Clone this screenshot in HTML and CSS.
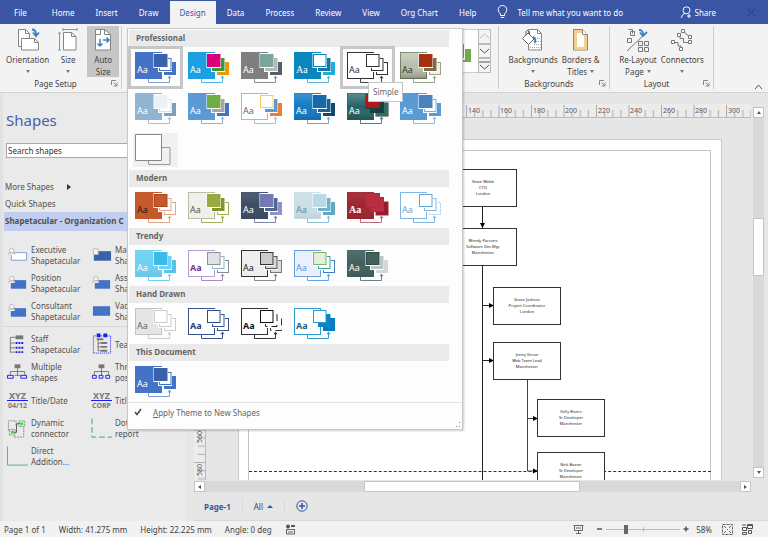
FILE: index.html
```html
<!DOCTYPE html>
<html lang="en">
<head>
<meta charset="utf-8">
<title>Organization chart</title>
<link rel="stylesheet" href="styles.css">
</head>
<body>
<svg class="defs" aria-hidden="true">
  <defs>
    <linearGradient id="shade" x1="0" y1="0" x2="0" y2="1"><stop offset="0" stop-color="#fff" stop-opacity=".5"/><stop offset=".5" stop-color="#fff" stop-opacity="0"/><stop offset="1" stop-color="#000" stop-opacity=".4"/></linearGradient>
    <symbol id="theme-art" viewBox="0 0 42 32">
      <path class="art-line" d="M13.500 27v3.500h21V25"/><path class="art-tip" d="M34.500 23.500l2 2.800h-4z"/>
      <rect class="art-main" x=".5" y=".5" width="26" height="26"/><rect class="art-shade" x=".5" y=".5" width="26" height="26" fill="url(#shade)"/>
      <rect class="art-gap" x="28.500" y="9.500" width="13" height="14"/><rect class="art-c" x="29.500" y="10.500" width="11" height="12"/>
      <rect class="art-gap" x="23" y="5" width="14" height="15"/><rect class="art-b" x="24.500" y="6.500" width="11.500" height="12"/>
      <rect class="art-gap" x="18.500" y="1" width="14.500" height="15"/><rect class="art-a" x="19.500" y="2.500" width="12.500" height="12"/>
    </symbol>
    <symbol id="launcher" viewBox="0 0 7 7"><path d="M.5 5V.5H5M2.500 2.500l3 3M6 2.500V6H2.500" fill="none" stroke="#888"/></symbol>
  </defs>
</svg>

<header class="tabs">
  <nav class="tab-list" aria-label="Ribbon tabs">
    <button class="tab file">File</button><button class="tab">Home</button><button class="tab">Insert</button><button class="tab">Draw</button><button class="tab active">Design</button><button class="tab">Data</button><button class="tab">Process</button><button class="tab">Review</button><button class="tab">View</button><button class="tab">Org Chart</button><button class="tab">Help</button>
  </nav>
  <button class="tell">
    <svg width="11" height="14" viewBox="0 0 11 14" fill="none" stroke="#fff"><path d="M3.500 10.500V9C2.500 7.800 1.200 6.800 1.200 4.800a4.300 4.300 0 0 1 8.600 0c0 2-1.300 3-2.300 4.200v1.500zM3.700 12.500h3.600"/></svg>
    Tell me what you want to do</button>
  <button class="share">
    <svg width="11" height="13" viewBox="0 0 11 13" fill="none" stroke="#fff"><circle cx="5.500" cy="4.300" r="3.500"/><path d="M.6 11.800C.6 9 2.500 7.800 4 7.600M8 8v4M6 10h4"/></svg>
    Share</button>
  <button class="close" aria-label="Close"><svg width="9" height="9" viewBox="0 0 9 9"><path d="M1 1l7 7M8 1L1 8" stroke="#2c3a63"/></svg></button>
</header>

<section class="ribbon" aria-label="Design">
  <div class="group setup">
    <div class="tools">
      <button class="tool"><svg width="24" height="24" viewBox="0 0 24 24" fill="#fff" stroke="#858585"><path d="M2.500 1.500h7l4 4v13h-11z"/><path d="M9.500 1.500v4h4" fill="none"/><path d="M5.500 10.500h13l4 4v7.500h-17z"/><path d="M18.500 10.500v4h4" fill="none"/><path d="M16 1.500c3 0 4 1.500 4 5M17 4.500l3 3.500 3-3.500" fill="none" stroke="#3f7fbf" stroke-width="1.800"/></svg><span>Orientation</span><i class="caret"></i></button>
      <button class="tool"><svg width="20" height="24" viewBox="0 0 20 24" fill="none" stroke="#858585"><path d="M5.500 4.500h8l4.500 4v13.500H5.500z" fill="#fff"/><path d="M13.500 4.500v4H18"/><path d="M5 1.500h14M5 0v3M19 0v3M1.500 5v17M0 5h3M0 22h3" stroke="#6a9ccb"/></svg><span>Size</span><i class="caret"></i></button>
      <button class="tool pressed"><svg width="18" height="24" viewBox="0 0 18 24" fill="#fff" stroke="#858585"><path d="M1.500 1.500h9l6 5V22h-15z"/><path d="M10.500 1.500v5h6M6.500 1.500v5h-5" fill="none"/><path d="M6 11v7M3.500 15.500L6 18l2.500-2.500M9 12h6M12.500 9.500L15 12l-2.500 2.500" fill="none" stroke="#3f7fbf" stroke-width="1.500"/></svg><span>Auto<br>Size</span></button>
    </div>
    <div class="group-name">Page Setup<svg class="launch"><use href="#launcher"/></svg></div>
  </div>
  <div class="group variants">
    <div class="preview"><svg width="10" height="24" viewBox="0 0 10 24"><path d="M0 6h9v13H0z" fill="#70ad47"/><path d="M0 0h3v17H0z" fill="#fff"/><path d="M0 1h2v14H0z" fill="#33b5a9"/></svg></div>
    <div class="spin">
      <button aria-label="Row up"><svg width="11" height="6" viewBox="0 0 11 6"><path d="M1 5l4.500-4L10 5" fill="none" stroke="#bbb"/></svg></button>
      <button aria-label="Row down"><svg width="11" height="6" viewBox="0 0 11 6"><path d="M1 1l4.500 4L10 1" fill="none" stroke="#555"/></svg></button>
      <button aria-label="More"><svg width="11" height="10" viewBox="0 0 11 10"><path d="M0 1h11M1 4l4.500 4L10 4" fill="none" stroke="#555"/></svg></button>
    </div>
  </div>
  <div class="group backgrounds">
    <div class="tools">
      <button class="tool"><svg width="24" height="24" viewBox="0 0 24 24" fill="none" stroke="#858585"><path d="M7.500 1.500h9l4 4V22h-13z" fill="#fff"/><path d="M16.500 1.500v4h4"/><path d="M9 19.500h11M13 16.500h7M15 13.500h5M16 10.500h4" stroke="#aaa" stroke-dasharray="1 1"/><path d="M1.500 10.500L7 5l6 6-5.500 5.500z" fill="#fff" stroke="#666"/><path d="M5 7.500V3.500q2-2.500 3.500 0V7" stroke="#666"/><path d="M12 9c3 1 2.500 4 1.500 6" stroke="#3f7fbf" stroke-width="2"/></svg><span>Backgrounds</span><i class="caret"></i></button>
      <button class="tool"><svg width="18" height="24" viewBox="0 0 18 24"><path d="M1.500 1.500h9l5 5V22h-14z" fill="#fff" stroke="#858585"/><path d="M2 2h8v3H5v14h7V7h3v14.500H2z" fill="#f7cf8c"/><path d="M10.500 1.500v5h5" fill="#fff" stroke="#858585"/></svg><span>Borders &amp;<br>Titles<i class="caret inline"></i></span></button>
    </div>
    <div class="group-name">Backgrounds<svg class="launch"><use href="#launcher"/></svg></div>
  </div>
  <div class="group layout">
    <div class="tools">
      <button class="tool"><svg width="24" height="24" viewBox="0 0 24 24" fill="none" stroke="#777"><path d="M2.500 1.500h4v4M4.500 3.500h4v4h-4zM1.500 10.500h4v4h-4zM12.500 13.500h4v4h-4zM18.500 13.500h4v4h-4zM12.500 19.500h4v4h-4zM18.500 19.500h4v4h-4z"/><path d="M1 23L20 5"/><path d="M13 2c3 0 4 1 4 5M14 4.500l3 3.500 4-4" stroke="#3f7fbf" stroke-width="1.800"/></svg><span>Re-Layout<br>Page<i class="caret inline"></i></span></button>
      <button class="tool"><svg width="24" height="24" viewBox="0 0 24 24" fill="#fff" stroke="#777"><path d="M5 14.500h3v3.500h3v3M19 14.500h-5.500v-4h-3.500V8M14 4l6 5" fill="none"/><path d="M11.500 1.500h3v3h-3zM18.500 7.500h3v3h-3zM1.500 12.500h3v3h-3zM7.500 5.500h3v3h-3zM18.500 12.500h3v3h-3zM9.500 19.500h3v3h-3z"/></svg><span>Connectors</span><i class="caret"></i></button>
    </div>
    <div class="group-name">Layout<svg class="launch"><use href="#launcher"/></svg></div>
  </div>
  <button class="collapse" aria-label="Collapse ribbon"><svg width="9" height="6" viewBox="0 0 9 6"><path d="M1 5l3.500-4L8 5" fill="none" stroke="#555"/></svg></button>
</section>

<main class="workspace">
  <aside class="shapes">
    <h1>Shapes</h1>
    <input class="search" type="text" value="Search shapes" aria-label="Search shapes">
    <button class="link-row">More Shapes <i class="right"></i></button>
    <button class="link-row">Quick Shapes</button>
    <div class="stencil">Shapetacular - Organization C</div>
    <div class="masters">
      <div class="master"><svg viewBox="0 0 22 22"><path d="M4.500 8.500h16v8h-16z" fill="#fff" stroke="#7da2d8"/><circle class="head" cx="5" cy="6.500" r="2.500"/><path class="head" d="M2 11V9h6v2"/></svg>Executive<br>Shapetacular</div>
      <div class="master"><svg viewBox="0 0 22 22"><path d="M3 7h18v10H3z" fill="#3a62ac"/><path class="head" d="M2.500 4.500h5v6h-5z"/></svg>Ma<br>Sha</div>
      <div class="master"><svg viewBox="0 0 22 22"><path d="M4 8h16v9H4z" fill="#4472c4"/><circle class="head" cx="5" cy="6.500" r="2.500"/><path class="head" d="M2 11V9h6v2"/></svg>Position<br>Shapetacular</div>
      <div class="master"><svg viewBox="0 0 22 22"><path d="M4 8h16v9H4z" fill="#4472c4"/><circle class="head" cx="5" cy="6.500" r="2.500"/><path class="head" d="M2 11V9h6v2"/></svg>Ass<br>Sha</div>
      <div class="master"><svg viewBox="0 0 22 22"><path d="M4 8h16v9H4z" fill="#4472c4"/><circle class="head" cx="5" cy="6.500" r="2.500"/><path class="head" d="M2 11V9h6v2"/></svg>Consultant<br>Shapetacular</div>
      <div class="master"><svg viewBox="0 0 22 22"><path d="M2 6h18v10H2z" fill="#4472c4"/></svg>Vac<br>Sha</div>
    </div>
    <div class="masters ruled">
      <div class="master"><svg viewBox="0 0 22 22"><path d="M9 2h8v4H9z" fill="#777"/><path d="M9 4H3.500v16M3.500 10h5M3.500 15h5M3.500 19.500h5" fill="none" stroke="#777"/><path d="M9 10h9M9 15h9M9 19.500h9" stroke="#1a1aff" stroke-width="2" stroke-dasharray="2 1"/></svg>Staff<br>Shapetacular</div>
      <div class="master"><svg viewBox="0 0 22 22"><path d="M2.500 2.500h18v18h-18z" fill="none" stroke="#1a1aff" stroke-dasharray="1 1"/><path d="M6 0h4v4H6zM13 0h4v4h-4z" fill="#1a1aff"/><path d="M6 5h7v2H6zM10 9h7v2h-7zM10 13h7v2h-7zM10 17h7v2h-7z" fill="#777"/><path d="M7.500 7v11M7 10h3M7 14h3M7 18h3" stroke="#777"/></svg>Tea</div>
      <div class="master"><svg viewBox="0 0 22 22"><path d="M8 3h6v4H8z" fill="#777"/><path d="M11 7v8M3.500 14v-3.500h15V14M8 14.500h6" fill="none" stroke="#777"/><path d="M.5 14.500h6v3h-6zM14.500 14.500h6v3h-6z" fill="#eee" stroke="#1a1aff"/></svg>Multiple<br>shapes</div>
      <div class="master"><svg viewBox="0 0 22 22"><path d="M8 3h6v4H8z" fill="#777"/><path d="M11 7v8M3.500 14v-3.500h15V14" fill="none" stroke="#777"/><path d="M1.500 14.500h4v3h-4zM8.500 14.500h4v3h-4zM15.500 14.500h4v3h-4z" fill="#eee" stroke="#1a1aff"/></svg>Thr<br>pos</div>
      <div class="master"><span class="stamp"><b>XYZ</b><small>04/12</small></span>Title/Date</div>
      <div class="master"><span class="stamp"><b>XYZ</b><small>CORP</small></span>Titl</div>
      <div class="master"><svg viewBox="0 0 22 22" fill="none" stroke="#888"><path d="M1.500 13.500v-10h8v6M7.500 20.500h10v-10" stroke-dasharray="2 1"/><path d="M12.500 3.500h6v6h-6zM2.500 12.500h6v6h-6z" stroke-dasharray="2 1"/><path d="M6 15.500h4v-9h4" stroke="#555"/><path d="M14 5h3v3h-3zM4 14h3v3H4z" fill="#35e835" stroke="none"/></svg>Dynamic<br>connector</div>
      <div class="master"><svg viewBox="0 0 22 22"><path d="M1 1v19.500h21" fill="none" stroke="#3a9c9c" stroke-dasharray="6 3"/></svg>Dot<br>report</div>
      <div class="master"><svg viewBox="0 0 22 22"><path d="M.5 1v19.500H22" fill="none" stroke="#5aa7a7"/></svg>Direct<br>Addition...</div>
    </div>
  </aside>

  <section class="drawing" aria-label="Drawing">
    <svg class="ruler-top" aria-hidden="true">
      <defs><pattern id="ticks" width="32.500" height="14" patternUnits="userSpaceOnUse"><path d="M.5 1v12M8.600 9v4M16.800 6v7M24.900 6v7" stroke="#aaa"/></pattern></defs>
      <rect width="100%" height="14" fill="url(#ticks)"/>
      <g><text x="262" y="9">140</text><text x="294" y="9">160</text><text x="327" y="9">180</text><text x="359" y="9">200</text><text x="392" y="9">220</text><text x="424" y="9">240</text><text x="457" y="9">260</text><text x="489" y="9">280</text><text x="522" y="9">300</text></g>
    </svg>
    <svg class="ruler-side" aria-hidden="true">
      <defs><pattern id="ticks-v" y="19" width="12" height="32.500" patternUnits="userSpaceOnUse"><path d="M0 .5h12M4 8.600h8M4 16.800h8M4 24.900h8" stroke="#aaa"/></pattern></defs>
      <rect width="12" height="100%" fill="url(#ticks-v)"/>
      <text transform="translate(8 325) rotate(-90)">560</text><text transform="translate(8 358) rotate(-90)">580</text>
    </svg>
    <div class="canvas">
      <div class="page">
        <div class="print-area"></div>
        <div class="break"></div>
        <svg class="wires" aria-hidden="true"><g fill="none" stroke="#222"><path d="M244.500 67v22M244.500 126v216M244.500 166.500H255M244.500 221.500H255"/><path d="M289.500 240v92H299M289.500 279.500H299" stroke="#444"/></g><path d="M242 84h5l-2.500 5zM251 164v5l5-2.500zM251 219v5l5-2.500zM295 277v5l5-2.500zM295 329.500v5l5-2.500z"/></svg>
        <div class="node n1">Steve Webb<br>CTO<br>London</div>
        <div class="node n2">Wendy Parsons<br>Software Dev Mgr<br>Manchester</div>
        <div class="node n3">Grace Jackson<br>Project Coordinator<br>London</div>
        <div class="node n4">Jenny Grove<br>Web Team Lead<br>Manchester</div>
        <div class="node n5">Kelly Rivers<br>Sr Developer<br>Manchester</div>
        <div class="node n6">Nick Baxter<br>Sr Developer<br>Manchester</div>
      </div>
    </div>
    <div class="vscroll"><button aria-label="Scroll up"><i class="arrow up"></i></button><div class="track"><div class="grip"></div></div><button aria-label="Scroll down"><i class="arrow down"></i></button></div>
    <div class="hscroll"><button aria-label="Scroll left"><i class="arrow left"></i></button><div class="track"><div class="grip"></div></div><button aria-label="Scroll right"><i class="arrow rightward"></i></button></div>
    <div class="page-tabs"><button class="current">Page-1</button><button>All <i class="tri"></i></button><button aria-label="Add page"><svg width="12" height="12" viewBox="0 0 12 12" fill="none" stroke="#3955a3"><circle cx="6" cy="6" r="5.200"/><path d="M6 3v6M3 6h6" stroke-width="1.500"/></svg></button></div>
  </section>
</main>

<footer class="status">
  <span>Page 1 of 1</span><span>Width: 41.275 mm</span><span>Height: 22.225 mm</span><span>Angle: 0 deg</span>
  <svg width="11" height="11" viewBox="0 0 11 11"><circle cx="3" cy="2.500" r="2" fill="#555"/><path d="M6 1h4v2H6zM1 5h9v1H1z" fill="#555"/><path d="M1.500 5.500h8v4.500h-8zM3 8h5" fill="none" stroke="#666"/></svg>
  <div class="zoom">
    <button aria-label="Presentation mode"><svg width="11" height="11" viewBox="0 0 11 11" fill="none" stroke="#666"><path d="M.5 1.500h10M1.500 2v4.500h8V2M5.500 6.500V9M3 9.500h5M3 4h5"/></svg></button>
    <button class="minus" aria-label="Zoom out"><svg width="6" height="6" viewBox="0 0 6 6"><path d="M0 3h5" stroke="#555" stroke-width="1.500"/></svg></button>
    <input type="range" min="0" max="100" value="26" aria-label="Zoom">
    <button aria-label="Zoom in"><svg width="6" height="6" viewBox="0 0 6 6"><path d="M.5 3h5M3 .5v5" stroke="#555" stroke-width="1.500"/></svg></button>
    <span class="percent">58%</span>
    <button aria-label="Fit page"><svg width="11" height="11" viewBox="0 0 11 11" fill="none" stroke="#666"><path d="M.5.5h10v10H.5z" stroke-dasharray="3 1"/><path d="M2 2l2 2M9 2L7 4M2 9l2-2M9 9L7 7M5 5.500h1"/></svg></button>
    <button aria-label="Switch windows"><svg width="11" height="11" viewBox="0 0 11 11" fill="none" stroke="#555"><path d="M.5 3.500h4v3h-4zM5.500.5h5v4h-5zM.5 8.500h4v2h-4zM6.500 6.500h3v3h-3zM5.500 1.500h5M0 1h4"/></svg></button>
  </div>
</footer>

<div class="gallery" role="dialog" aria-label="Themes">
  <div class="gallery-body">
    <h2>Professional</h2>
    <div class="themes">
      <button class="theme picked office"><svg><use href="#theme-art"/></svg><span>Aa</span></button>
      <button class="theme linear"><svg><use href="#theme-art"/></svg><span>Aa</span></button>
      <button class="theme zephyr"><svg><use href="#theme-art"/></svg><span>Aa</span></button>
      <button class="theme integral"><svg><use href="#theme-art"/></svg><span class="serif">Aa</span></button>
      <button class="theme picked simple"><svg><use href="#theme-art"/></svg><span>Aa</span></button>
      <button class="theme whisp"><svg><use href="#theme-art"/></svg><span>Aa</span></button>
      <button class="theme daybreak"><svg><use href="#theme-art"/></svg><span>Aa</span></button>
      <button class="theme parallel"><svg><use href="#theme-art"/></svg><span>Aa</span></button>
      <button class="theme sequence"><svg><use href="#theme-art"/></svg><span>Aa</span></button>
      <button class="theme slice"><svg><use href="#theme-art"/></svg><span>Aa</span></button>
      <button class="theme ion"><svg><use href="#theme-art"/></svg><span>Aa</span></button>
      <button class="theme retro"><svg><use href="#theme-art"/></svg><span>Aa</span></button>
      <button class="theme none" aria-label="No theme"><svg viewBox="0 0 42 32"><path d="M-2-1h45v34H-2z" fill="#f1f1f1"/><path d="M13.500 27v3.500h21.500V13.500h-8" fill="#f1f1f1" stroke="#999"/><path d="M.5.5h26v26H.5z" fill="#fff" stroke="#888"/></svg></button>
    </div>
    <h2>Modern</h2>
    <div class="themes">
      <button class="theme organic"><svg><use href="#theme-art"/></svg><span>Aa</span></button>
      <button class="theme facet"><svg><use href="#theme-art"/></svg><span>Aa</span></button>
      <button class="theme prominence"><svg><use href="#theme-art"/></svg><span>Aa</span></button>
      <button class="theme smoke"><svg><use href="#theme-art"/></svg><span>Aa</span></button>
      <button class="theme radiance"><svg><use href="#theme-art"/></svg><span class="serif heavy">Aa</span></button>
      <button class="theme shade"><svg><use href="#theme-art"/></svg><span>Aa</span></button>
    </div>
    <h2>Trendy</h2>
    <div class="themes">
      <button class="theme pencil"><svg><use href="#theme-art"/></svg><span>Aa</span></button>
      <button class="theme clouds"><svg><use href="#theme-art"/></svg><span class="heavy">Aa</span></button>
      <button class="theme gemstone"><svg><use href="#theme-art"/></svg><span>Aa</span></button>
      <button class="theme lines"><svg><use href="#theme-art"/></svg><span>Aa</span></button>
      <button class="theme bubble"><svg><use href="#theme-art"/></svg><span>Aa</span></button>
    </div>
    <h2>Hand Drawn</h2>
    <div class="themes">
      <button class="theme drawn-grey"><svg><use href="#theme-art"/></svg><span>Aa</span></button>
      <button class="theme drawn-navy"><svg><use href="#theme-art"/></svg><span class="heavy">Aa</span></button>
      <button class="theme drawn-black"><svg><use href="#theme-art"/></svg><span class="heavy">Aa</span></button>
      <button class="theme drawn-blue"><svg><use href="#theme-art"/></svg><span class="heavy">Aa</span></button>
    </div>
    <h2>This Document</h2>
    <div class="themes"><button class="theme office"><svg><use href="#theme-art"/></svg><span>Aa</span></button></div>
  </div>
  <button class="apply"><svg width="8" height="8" viewBox="0 0 8 8"><path d="M1 4l2 2.500L7 1" fill="none" stroke="#444" stroke-width="1.500"/></svg><span><u>A</u>pply Theme to New Shapes</span></button>
  <svg class="resize" width="6" height="6" viewBox="0 0 6 6"><path d="M4 0h1v1H4zM4 4h1v1H4zM1 4h1v1H1z" fill="#888"/></svg>
  <div class="tooltip" role="tooltip">Simple</div>
</div>
</body>
</html>
```

FILE: styles.css
```css
* { box-sizing: border-box; }

body {
  margin: 0;
  min-height: 100vh;
  display: grid;
  grid-template-rows: 24px 69px 1fr 16px;
  position: relative;
  font: 8px/11px "Noto Sans", "Open Sans", sans-serif;
  color: #444;
  background: #e6e6e6;
  overflow: hidden;
}

button {
  font: inherit;
  color: inherit;
  background: none;
  border: 0;
  padding: 0;
  margin: 0;
}

svg { display: block; flex: none; overflow: visible; }
.defs { position: absolute; width: 0; height: 0; }

/* Tab bar */
.tabs { display: flex; background: #3955a3; color: #fff; }
.tab-list { display: flex; gap: 1px; padding-top: 1px; }
.tab { padding: 0 10px; }
.tab.file { padding: 0 14px; }
.tab.active { background: #f3f3f3; color: #3955a3; }
.tell { display: flex; align-items: center; gap: 9px; margin-left: 11px; }
.share { display: flex; align-items: center; gap: 3px; margin-left: auto; }
.close { margin: 0 12px 0 31px; }

/* Ribbon */
.ribbon { display: flex; background: #f3f3f3; border-bottom: 1px solid #d2d2d2; color: #444; }
.group { display: flex; flex-direction: column; justify-content: space-between; border-right: 1px solid #ccc; margin: 2px 0 3px; }
.setup { width: 122px; }
.backgrounds { width: 111px; }
.layout { width: 104px; }
.tools { display: flex; justify-content: center; gap: 4px; }
.setup .tools { justify-content: flex-start; gap: 9px; padding-left: 6px; }
.tool { display: flex; flex-direction: column; align-items: center; padding: 2px 0 0; height: 51px; line-height: 12px; }
.tool svg { margin-bottom: 2px; }
.tool.pressed { background: #c6c6c6; width: 32px; }
.caret { width: 0; height: 0; border: 2px solid transparent; border-top: 3px solid #777; border-bottom: 0; margin-top: 4px; }
.caret.inline { display: inline-block; margin: 0 0 2px 3px; }
.group-name { display: flex; align-items: center; justify-content: center; position: relative; height: 11px; padding-right: 10px; }
.launch { position: absolute; right: 3px; width: 7px; height: 7px; }
.variants { width: 377px; flex-direction: row; justify-content: flex-end; align-items: flex-start; padding: 3px 7px 0 0; }
.preview { height: 44px; width: 16px; background: #fff; border: 1px solid #ccc; border-width: 1px 0; padding-top: 13px; }
.spin { display: flex; flex-direction: column; width: 13px; height: 44px; }
.spin button { flex: 1; display: grid; place-items: center; border: 1px solid #bbb; }
.collapse { margin: auto 5px 2px auto; }

/* Workspace */
.workspace { display: grid; grid-template-columns: 186px 1fr; min-height: 0; }

.shapes { background: #eaeaea; border-left: 3px solid #e2e2e2; padding-top: 17px; overflow: hidden; color: #505050; }
.shapes h1 { margin: 0 0 13px 3px; font-size: 15px; line-height: 20px; font-weight: 400; color: #4561ab; }
.search { display: block; width: 170px; height: 15px; margin: 0 0 20px 3px; padding: 0 1px; border: 1px solid #aaa; background: #fff; font: inherit; color: #333; }
.link-row { display: flex; align-items: center; gap: 13px; height: 17px; margin-left: 2px; }
.right { border: 3px solid transparent; border-left: 4px solid #333; border-right: 0; }
.stencil { height: 19px; margin: 0 0 10px 1px; padding-left: 1px; background: #c1cdf1; font-weight: 700; line-height: 18px; white-space: nowrap; overflow: hidden; }
.masters { display: grid; grid-template-columns: 84px 84px; grid-auto-rows: 28px; padding-left: 4px; }
.masters.ruled { margin-top: 1px; border-top: 1px solid #d8d8d8; padding-top: 3px; }
.master { display: grid; grid-template-columns: 21px 1fr; column-gap: 3px; align-content: center; white-space: nowrap; }
.master { line-height: 11px; }
.master svg, .stamp { grid-row: 1 / 3; width: 21px; height: 22px; }
.master { display: flex; align-items: center; }
.head { fill: #f4f4f4; stroke: #bbb; stroke-width: 1; }
.stamp { display: flex; flex: none; flex-direction: column; align-items: center; justify-content: center; color: #777; line-height: 9px; }
.stamp b { font-size: 9px; border-bottom: 1px solid #1a1aff; width: 21px; text-align: center; }
.stamp small { font-size: 7px; font-weight: 700; }

/* Drawing window */
.drawing { display: grid; grid-template: 11px 14px 1fr 12px 29px / 8px 12px 1fr 17px; min-height: 0; background: #e6e6e6; }
.ruler-top { grid-area: 2 / 3; width: 100%; height: 14px; overflow: hidden; background: #ececec; border-bottom: 1px solid #bbb; font-size: 7px; fill: #555; }
.ruler-side { grid-area: 3 / 2; width: 12px; height: 100%; overflow: hidden; background: #ececec; border-right: 1px solid #bbb; font-size: 7px; fill: #555; }
.canvas { grid-area: 3 / 3; overflow: hidden; min-height: 0; padding: 21px 29px 0 32px; }
.page { position: relative; height: 100%; background: #fff; border: 1px solid #c8ccd2; border-bottom: 0; }
.print-area { position: absolute; inset: 10px 10px 0 9px; border: 1px solid #c4c4c4; border-bottom: 0; }
.break { position: absolute; left: 10px; right: 10px; top: 331px; border-top: 1px dashed #333; }
.wires { position: absolute; left: -1px; top: -1px; width: 100%; height: 100%; }
.node { position: absolute; width: 68px; height: 38px; border: 1px solid #333; background: #fff; display: grid; place-content: center; text-align: center; font-size: 4px; line-height: 6px; color: #222; white-space: nowrap; }
.n1 { left: 210px; top: 29px; }
.n2 { left: 210px; top: 88px; }
.n3 { left: 254px; top: 147px; }
.n4 { left: 254px; top: 202px; }
.n5 { left: 298px; top: 259px; }
.n6 { left: 298px; top: 312px; }

.vscroll { grid-area: 2 / 4 / 4; display: flex; flex-direction: column; width: 11px; margin: 3px 0 2px 2px; }
.hscroll { grid-area: 4 / 2 / 5 / 4; display: flex; margin-top: 1px; }
.vscroll button, .hscroll button { flex: none; width: 11px; height: 11px; display: grid; place-items: center; background: #fff; border: 1px solid #c4c4c4; }
.track { flex: 1; background: #d9d9d9; display: flex; }
.vscroll .track { flex-direction: column; padding-top: 100px; }
.vscroll .grip { height: 58px; }
.hscroll .track { padding-left: 159px; }
.hscroll .grip { width: 216px; }
.grip { background: #fff; border: 1px solid #c4c4c4; }
.arrow { border: 2px solid transparent; }
.up { border-bottom: 3px solid #555; border-top: 0; }
.down { border-top: 3px solid #555; border-bottom: 0; }
.left { border-right: 3px solid #555; border-left: 0; }
.rightward { border-left: 3px solid #555; border-right: 0; }
.page-tabs { grid-area: 5 / 2 / 6 / 5; display: flex; align-items: center; padding-left: 10px; border-bottom: 1px solid #d8d8d8; }
.page-tabs button { display: flex; align-items: center; gap: 4px; height: 14px; padding-right: 11px; margin-right: 11px; border-right: 1px solid #dadada; }
.page-tabs button:last-child { border: 0; }
.page-tabs .current { font-weight: 700; color: #3955a3; }
.tri { border: 3px solid transparent; border-bottom-color: #3955a3; border-top: 0; }

/* Status bar */
.status { display: flex; align-items: center; gap: 13px; padding: 0 15px 0 4px; background: #f1f1f1; color: #444; }
.zoom { display: flex; align-items: center; margin-left: auto; }
.minus { margin-left: 13px; }
.zoom input { appearance: none; width: 74px; height: 11px; margin: 0 3px; background: linear-gradient(#bbb, #bbb) center / 100% 1px no-repeat, linear-gradient(#bbb, #bbb) center / 1px 5px no-repeat; }
.zoom input::-webkit-slider-thumb { appearance: none; width: 4px; height: 9px; background: #666; }
.percent { margin: 0 10px 0 7px; }
.zoom button:last-child { margin-left: 9px; }

/* Theme gallery */
.gallery { position: absolute; left: 127px; top: 28px; width: 336px; background: #fdfdfd; border: 1px solid #c6c6c6; box-shadow: 1px 1px 2px #0003; }
.gallery-body { padding: 1px 13px 0 1px; }
.gallery h2 { margin: 0; height: 17px; padding-left: 7px; background: #eaeaea; font-size: 8px; line-height: 16px; color: #666; }
.themes { display: grid; grid-template-columns: repeat(6, 53px); grid-auto-rows: 41px; }
.theme { position: relative; display: grid; place-items: center; }
.theme svg { width: 42px; height: 32px; }
.theme.picked { outline: 3px solid #c6c6c6; outline-offset: -2px; }
.theme span { position: absolute; left: 8px; bottom: 12px; font-size: 9px; line-height: 12px; color: var(--text, #fff); }
.theme .serif { font-family: "Liberation Serif", serif; font-size: 10px; }
.theme .heavy { font-weight: 700; }
.art-main { fill: var(--main); stroke: var(--edge, var(--main)); }
.art-shade { opacity: var(--shade, 0); }
.art-gap { fill: var(--gap, #fff); }
.art-a { fill: var(--a); stroke: var(--ae, var(--a)); }
.art-b { fill: var(--b); stroke: var(--be, var(--b)); stroke-dasharray: var(--dash, none); }
.art-c { fill: var(--c); stroke: var(--ce, var(--c)); stroke-dasharray: var(--dash-c, var(--dash, none)); }
.art-line { fill: none; stroke: var(--line); }
.art-tip { fill: var(--line); }

.office { --main: #4472c4; --a: #3a62ac; --b: #fff; --be: #4472c4; --c: #4472c4; --line: #7e9dd5; }
.linear { --main: #1ca0e2; --a: #da0078; --b: #359c35; --c: #f1960f; --line: #4fb3e5; }
.zephyr { --main: #7f7f7f; --a: #7aa69d; --b: #b8b8b8; --c: #515f6e; --line: #8d8d8d; }
.integral { --main: #0886bd; --a: #fff; --ae: #0886bd; --b: #14799c; --c: #20ace0; --line: #68b3d2; }
.simple { --main: #fff; --edge: #333; --a: #fff; --ae: #333; --b: #fff; --be: #333; --c: #fff; --ce: #333; --line: #444; --text: #333; }
.whisp { --main: #b8bfaa; --edge: #747c5e; --a: #a53010; --b: #786f4d; --c: #f2f0e8; --ce: #a3a080; --line: #99a284; --text: #333; --shade: .6; }
.daybreak { --main: #91b4d3; --a: #edf1f6; --b: #fff; --be: #d5e0eb; --c: #7d9fbe; --line: #a4bfd7; }
.parallel { --main: #5b9bd5; --a: #70ad47; --b: #a5a5a5; --c: #4472c4; --line: #86b3df; }
.sequence { --main: #fff; --edge: #b5b5b5; --a: #fff; --ae: #f9cb52; --b: #5b9bd5; --c: #ed7d31; --line: #bbb; --text: #666; }
.slice { --main: #147bc3; --a: #166aa6; --b: #176299; --c: #15476e; --line: #7aa7c8; --shade: .35; }
.ion { --main: #246466; --a: #b31616; --b: #183f40; --c: #356c61; --line: #557e80; --gap: #183f40; --shade: .5; }
.retro { --main: #5b9bd5; --a: #4982bc; --b: #fff; --be: #79ace0; --c: #5b9bd5; --line: #91bae5; }
.organic { --main: #c6592b; --a: #c6592b; --ae: #a9451d; --b: #fff; --be: #dfa58c; --c: #fff; --ce: #dfa58c; --line: #dfa58c; --text: #2b1510; }
.facet { --main: #eef0e9; --edge: #b8bda8; --a: #96aa3d; --b: #7f9431; --c: #fff; --ce: #9eb34b; --line: #9fae5c; --text: #555; }
.prominence { --main: #3c4d63; --a: #7478b4; --b: #4e678b; --c: #9191c5; --line: #78879b; --shade: .2; }
.smoke { --main: #cadfe7; --a: #bbd9e4; --b: #6db4cb; --c: #5caac3; --line: #8bc1d2; --text: #568b9e; --shade: .15; }
.radiance { --main: #9e2533; --a: #b72e3e; --b: #ba3040; --c: #921e2c; --line: #bd6a73; --gap: #a52d3a; --shade: .15; }
.shade { --main: #fff; --edge: #83b7e3; --a: #fff; --ae: #64a5da; --b: #fff; --be: #83b7e3; --c: #fff; --ce: #a5c9eb; --line: #83b7e3; --text: #64a5da; --dash-c: 2 1; }
.pencil { --main: #6fd0f1; --a: #3abbe8; --b: #70d0f1; --c: #55c5ed; --line: #72cfef; --shade: .15; }
.clouds { --main: #fff; --edge: #b6a0c9; --a: #dfe1e6; --ae: #909090; --b: #fff; --be: #8ab2ca; --c: #fff; --ce: #888; --line: #a98bc2; --text: #6c3b91; }
.gemstone { --main: #eee; --edge: #333; --a: #ccc; --ae: #333; --b: #d7d7d7; --be: #555; --c: #ddd; --ce: #777; --line: #888; --text: #222; }
.lines { --main: #eaf0ff; --edge: #6d9dd4; --a: #e2f0d9; --ae: #83b26c; --b: #fff; --be: #31a098; --c: #fff; --ce: #427fc2; --line: #65a5e8; --text: #5299e4; }
.bubble { --main: #43605e; --a: #43605e; --ae: #304a48; --b: #bec5c5; --c: #d3d7d7; --line: #6d8080; --shade: .2; }
.drawn-grey { --main: #e5e5e5; --edge: #c2c2c2; --a: #fff; --ae: #ccc; --b: #fff; --be: #ccc; --c: #fff; --ce: #ccc; --line: #ccc; --text: #666; }
.drawn-navy { --main: #fff; --edge: #38548c; --a: #fff; --ae: #294b8b; --b: #fff; --be: #38548c; --c: #fff; --ce: #38548c; --line: #38548c; --text: #24407a; }
.drawn-black { --main: #fff; --edge: #333; --a: #fff; --ae: #111; --b: #fff; --be: #222; --c: #fff; --ce: #333; --line: #333; --text: #111; --dash: 7 4; }
.drawn-blue { --main: #fff; --edge: #2c9bd1; --a: #fff; --ae: #2c9bd1; --b: #0787ca; --c: #077cc0; --line: #2c9bd1; --text: #17608a; --gap: transparent; }

.apply { display: flex; align-items: center; gap: 11px; width: 100%; height: 27px; padding: 0 0 8px 6px; border-top: 1px solid #e3e3e3; color: #666; }
.resize { position: absolute; right: 1px; bottom: 1px; }
.tooltip { position: absolute; left: 240px; top: 53px; padding: 3px 4px; background: #fff; border: 1px solid #c4c4c4; color: #6a6a6a; line-height: 12px; }
```
